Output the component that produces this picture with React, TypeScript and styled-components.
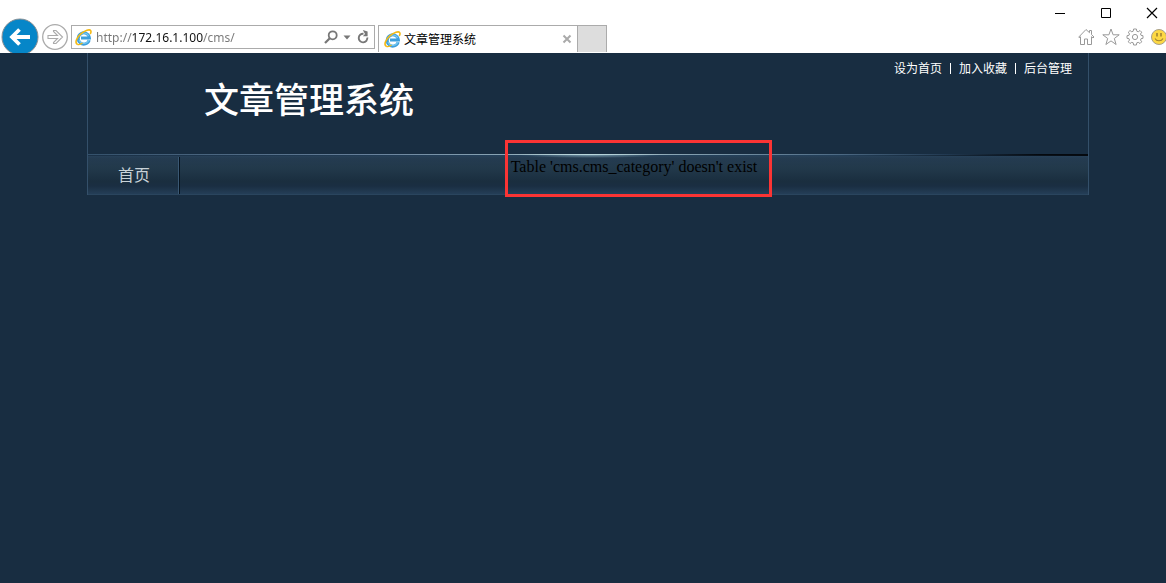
import React from "react";
import styled, { createGlobalStyle } from "styled-components";

const GlobalStyle = createGlobalStyle`
  * { box-sizing: border-box; }
  body {
    margin: 0;
    min-height: 100vh;
    background: #182d41;
    font-family: "Liberation Sans", "Noto Sans CJK SC", sans-serif;
  }
  button {
    padding: 0;
    border: 0;
    background: none;
    font: inherit;
    color: inherit;
    display: flex;
    align-items: center;
    justify-content: center;
    flex: none;
  }
  svg { display: block; flex: none; }
`;

const Chrome = styled.header`
  background: #fff;
  overflow: hidden;
`;

const TitleBar = styled.div`
  display: flex;
  justify-content: flex-end;
  gap: 18px;
  height: 25px;
`;

const WindowButton = styled.button`
  width: 28px;
  height: 26px;
`;

const Toolbar = styled.div`
  display: flex;
  align-items: flex-start;
  height: 28px;
`;

const History = styled.nav`
  display: flex;
  align-items: center;
  gap: 3px;
  width: 71px;
  height: 24px;
  padding-left: 1px;
  flex: none;
`;

const AddressBar = styled.form`
  display: flex;
  align-items: center;
  width: 304px;
  height: 24px;
  padding: 0 4px 0 3px;
  border: 1px solid #ababab;
  flex: none;
`;

const AddressInput = styled.input`
  flex: 1;
  min-width: 0;
  height: 22px;
  margin-left: 4px;
  padding: 1px 0 0;
  border: 0;
  outline: 0;
  font: 12px/20px "Noto Sans", "Open Sans", sans-serif;
  color: transparent;
  background: linear-gradient(90deg, #777 36px, #111 36px, #111 107px, #777 107px);
  background-clip: text;
  -webkit-background-clip: text;
`;

const AddressTools = styled.div`
  display: flex;
  align-items: center;
  gap: 5px;
`;

const Tabs = styled.div`
  display: flex;
  height: 27px;
  margin-left: 3px;
`;

const Tab = styled.div`
  display: flex;
  align-items: center;
  gap: 3px;
  width: 199px;
  padding: 0 5px;
  border: solid #ababab;
  border-width: 1px 0 0 1px;
  font: 12px/18px "Noto Sans CJK SC", sans-serif;
  color: #000;
`;

const TabTitle = styled.span`
  flex: 1;
`;

const NewTab = styled.button`
  && {
    width: 30px;
    border: 1px solid #ababab;
    border-bottom: 0;
    background: #ddd;
  }
`;

const BrowserTools = styled.div`
  display: flex;
  align-items: center;
  gap: 6px;
  height: 23px;
  margin: 0 -2px 0 auto;
`;

const Page = styled.main`
  display: flex;
  justify-content: center;
  align-items: flex-start;
  min-height: calc(100vh - 53px);
  padding-left: 10px;
`;

const Site = styled.div`
  width: 100%;
  max-width: 1002px;
  border: solid #34506a;
  border-width: 0 1px;
`;

const Banner = styled.div`
  display: flex;
  justify-content: space-between;
  align-items: flex-start;
  height: 101px;
  padding: 5px 16px 0 116px;
`;

const Logo = styled.h1`
  margin: 14px 0 0;
  font: 500 35px/52px "Noto Sans CJK SC", sans-serif;
  color: #fff;
`;

const QuickLinks = styled.nav`
  display: flex;
  align-items: center;
  gap: 8px;
  font: 12px/20px "Noto Sans CJK SC", sans-serif;
`;

const QuickLink = styled.a`
  color: #fff;
  text-decoration: none;
`;

const Separator = styled.span`
  width: 1px;
  height: 11px;
  background: #fff;
`;

const NavBar = styled.div`
  display: flex;
  height: 41px;
  border-bottom: 1px solid #2a455e;
  background:
    radial-gradient(ellipse 70px 3px at 502px 1px, #9fc3cfa0 0%, transparent 100%),
    linear-gradient(90deg, #34516b 0%, #67809a 28%, #8ba6b5 42%, #d8efee 50%, #8ba6b5 58%, #4d6a84 75%, #203850 86%, #05090e 95%, #05090e 100%) 0 0 / 100% 1px no-repeat,
    linear-gradient(90deg, #1b3147 0%, #24405a 40%, #24405a 75%, #101e2c 90%, #05090e 100%) 0 1px / 100% 1px no-repeat,
    linear-gradient(#29445d 0%, #243b50 12%, #22394b 35%, #1a2e3f 68%, #1a2e42 80%, #243e57 100%);
`;

const NavLink = styled.a`
  width: 92px;
  margin-top: 3px;
  padding-left: 30px;
  border-right: 1px solid #06131f;
  box-shadow: inset -1px 0 #3a5873;
  font: 16px/34px "Noto Sans CJK SC", sans-serif;
  color: #c8d2d8;
  text-decoration: none;
`;

const NavContent = styled.div`
  flex: 1;
  text-align: center;
  padding-top: 4px;
`;

const ErrorText = styled.span`
  position: relative;
  font: 16px/18px "Liberation Serif", serif;
  color: #000;
`;

const Highlight = styled.span`
  position: absolute;
  inset: -18px -15px -21px -6px;
  height: 57px;
  border: 3px solid #fb3434;
  pointer-events: none;
`;

const ExplorerIcon = () => (
  <svg width="17" height="17" viewBox="0 0 17 17" fill="none">
    <path d="M14.2 11.1A5.6 5.6 0 1 1 14.4 8.9H6" stroke="#3d9fdc" strokeWidth="3" />
    <path d="M13.8 11A5.2 5.2 0 0 1 4 10.8M4.2 7A5.2 5.2 0 0 1 13.6 7" stroke="#74c8f2" strokeWidth="1.2" />
    <path d="M2.6 15.4C-.6 14.2 1.4 8.7 6.1 4.7C10 1.3 14.6-.1 15.7 1.6C16.2 2.4 15.9 3.8 15.2 5" stroke="#f4b914" strokeWidth="1.6" />
    <path d="M2.4 15.2C3.6 16 6.2 15 7.5 14" stroke="#f4b914" strokeWidth="1.3" />
  </svg>
);

export default function App() {
  return (
    <>
      <GlobalStyle />
      <Chrome>
        <TitleBar>
          <WindowButton aria-label="Minimize">
            <svg width="12" height="12" viewBox="0 0 12 12"><path d="M1 6.5H11" stroke="#000" /></svg>
          </WindowButton>
          <WindowButton aria-label="Maximize">
            <svg width="12" height="12" viewBox="0 0 12 12"><path d="M1.5 1.5H10.5V10.5H1.5Z" fill="none" stroke="#000" /></svg>
          </WindowButton>
          <WindowButton aria-label="Close">
            <svg width="12" height="12" viewBox="0 0 12 12"><path d="M1 1L11 11M11 1L1 11" stroke="#000" strokeWidth="1.2" /></svg>
          </WindowButton>
        </TitleBar>
        <Toolbar>
          <History aria-label="History">
            <button aria-label="Back">
              <svg width="38" height="38" viewBox="0 0 38 38" fill="none">
                <circle cx="19" cy="19" r="18" fill="#0686c8" stroke="#8b8f93" />
                <path d="M29 19H11.5M18.5 11.5L11 19L18.5 26.5" stroke="#fff" strokeWidth="3.8" />
                <path d="M8 36H30" stroke="#fff" strokeWidth="1" />
              </svg>
            </button>
            <button aria-label="Forward">
              <svg width="26" height="26" viewBox="0 0 26 26" fill="none" stroke="#ababab">
                <circle cx="13" cy="13" r="12.3" strokeWidth="1.3" />
                <path d="M6 11.5H15.5L11.5 7.5V6.5H14L20.5 13L14 19.5H11.5V18.5L15.5 14.5H6Z" strokeWidth="1.1" />
              </svg>
            </button>
          </History>
          <AddressBar onSubmit={(e) => e.preventDefault()}>
            <ExplorerIcon />
            <AddressInput aria-label="Address" defaultValue="http://172.16.1.100/cms/" />
            <AddressTools>
              <button type="button" aria-label="Search">
                <svg width="14" height="14" viewBox="0 0 14 14" fill="none" stroke="#777">
                  <circle cx="8.7" cy="5.3" r="4" strokeWidth="1.8" />
                  <path d="M5.8 8.2L1 13" strokeWidth="2.2" />
                </svg>
              </button>
              <button type="button" aria-label="Show address list">
                <svg width="8" height="5" viewBox="0 0 8 5"><path d="M.5 .5H7.5L4 4.5Z" fill="#777" /></svg>
              </button>
              <button type="submit" aria-label="Refresh">
                <svg width="14" height="14" viewBox="0 0 14 14" fill="none">
                  <path d="M11.3 7.5A4.3 4.3 0 1 1 7.5 3.8" stroke="#777" strokeWidth="1.9" />
                  <path d="M6.8 0L11.6 1.4V6.2H6.8L9 4Z" fill="#777" />
                </svg>
              </button>
            </AddressTools>
          </AddressBar>
          <Tabs>
            <Tab>
              <ExplorerIcon />
              <TabTitle>文章管理系统</TabTitle>
              <button aria-label="Close tab">
                <svg width="10" height="10" viewBox="0 0 10 10"><path d="M1.5 1.5L8.5 8.5M8.5 1.5L1.5 8.5" stroke="#aaa" strokeWidth="2" /></svg>
              </button>
            </Tab>
            <NewTab aria-label="New tab" />
          </Tabs>
          <BrowserTools>
            <button aria-label="Home">
              <svg width="18" height="18" viewBox="0 0 18 18" fill="none" stroke="#999">
                <path d="M.8 9L8 1.5L11.5 4.7V2.5H13.5V6.6L16 9L15 10L13.5 8.7V16.5H9.5V11H6.5V16.5H2.5V8.7L1.6 10Z" />
              </svg>
            </button>
            <button aria-label="Favorites">
              <svg width="18" height="18" viewBox="0 0 18 18" fill="none" stroke="#999">
                <path d="M9 1L11.1 6.8H17.2L12.3 10.5L14.1 16.5L9 12.9L3.9 16.5L5.7 10.5L.8 6.8H6.9Z" />
              </svg>
            </button>
            <button aria-label="Settings">
              <svg width="18" height="18" viewBox="0 0 18 18" fill="none" stroke="#999">
                <path d="M7.6 1H10.4L10.8 3.2L12.2 3.8L14 2.5L15.7 4.2L14.5 6L15 7.3L17 7.7V10.3L15 10.7L14.5 12L15.7 13.8L14 15.5L12.2 14.3L10.8 14.8L10.4 17H7.6L7.2 14.8L5.8 14.3L4 15.5L2.3 13.8L3.5 12L3 10.7L1 10.3V7.7L3 7.3L3.5 6L2.3 4.2L4 2.5L5.8 3.8L7.2 3.2Z" />
                <circle cx="9" cy="9" r="2.6" />
              </svg>
            </button>
            <button aria-label="Send a smile">
              <svg width="18" height="18" viewBox="0 0 18 18" fill="none">
                <circle cx="9" cy="9" r="7.5" fill="#fdd843" stroke="#a8a08a" />
                <path d="M7 5V8.5M11 5V8.5" stroke="#a08430" strokeWidth="1.6" />
                <path d="M5 10.5C6.5 13.5 11.5 13.5 13 10.5" stroke="#a08430" strokeWidth="1.1" />
              </svg>
            </button>
          </BrowserTools>
        </Toolbar>
      </Chrome>
      <Page>
        <Site>
          <Banner>
            <Logo>文章管理系统</Logo>
            <QuickLinks>
              <QuickLink href="#home">设为首页</QuickLink>
              <Separator />
              <QuickLink href="#favorite">加入收藏</QuickLink>
              <Separator />
              <QuickLink href="#admin">后台管理</QuickLink>
            </QuickLinks>
          </Banner>
          <NavBar>
            <NavLink href="#index">首页</NavLink>
            <NavContent>
              <ErrorText>
                Table 'cms.cms_category' doesn't exist
                <Highlight />
              </ErrorText>
            </NavContent>
          </NavBar>
        </Site>
      </Page>
    </>
  );
}
